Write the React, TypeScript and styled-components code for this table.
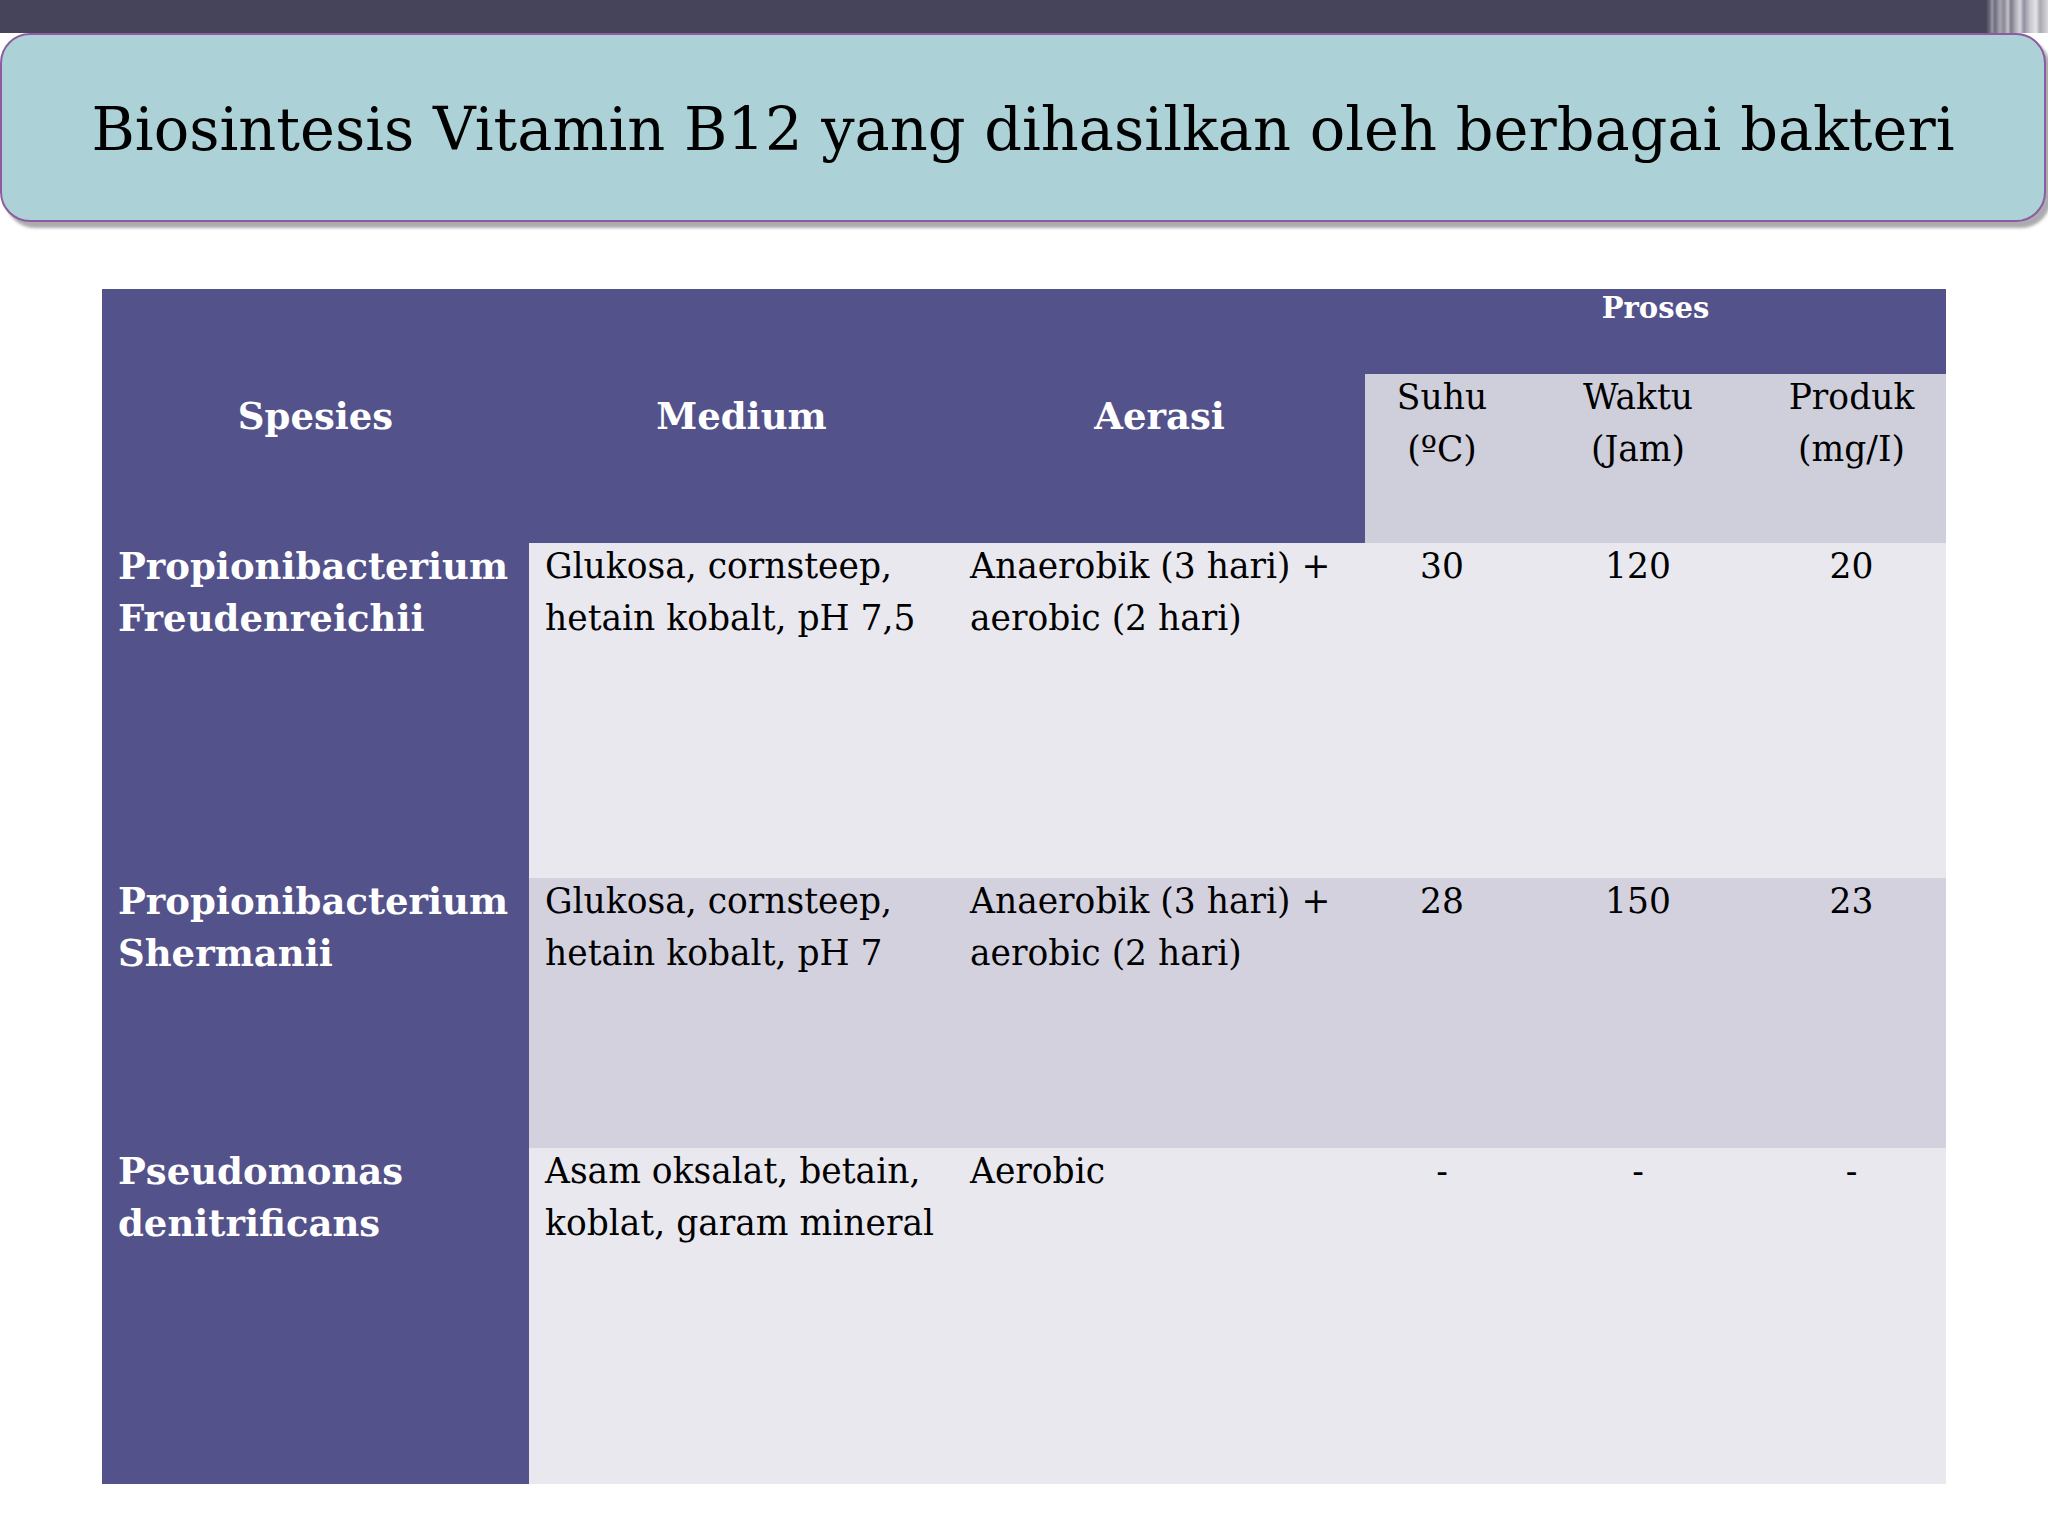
import React from "react";
import styled, { createGlobalStyle } from "styled-components";

const GlobalStyle = createGlobalStyle`
  html, body {
    margin: 0;
    padding: 0;
    background: #ffffff;
  }
  body {
    font-family: "DejaVu Serif", "Liberation Serif", serif;
  }
`;

const Slide = styled.div`
  width: 2048px;
  height: 1536px;
  background: #ffffff;
  display: flex;
  flex-direction: column;
  overflow: hidden;
`;

const TopBar = styled.div`
  height: 33px;
  background: #46445a;
  display: flex;
  justify-content: flex-end;
  flex-shrink: 0;
`;

const Stripes = styled.div`
  width: 62px;
  height: 100%;
  background: linear-gradient(
    90deg,
    #46445a 0px,
    #6e6d7c 4px,
    #9a99a6 6px,
    #6e6d7c 9px,
    #a7a6b2 14px,
    #8a8996 18px,
    #c5c4cc 22px,
    #7b7a88 25px,
    #b4b3bd 30px,
    #d6d5dc 34px,
    #8f8e9b 38px,
    #c8c7cf 44px,
    #e4e3e8 50px,
    #a9a8b2 54px,
    #d9d8de 62px
  );
`;

const TitleBox = styled.div`
  width: 2046px;
  height: 189px;
  box-sizing: border-box;
  background: #acd2d7;
  border: 2px solid #8d5c9f;
  border-radius: 30px;
  box-shadow: 5px 6px 3px rgba(70, 70, 80, 0.45);
  display: flex;
  align-items: center;
  justify-content: center;
  flex-shrink: 0;
`;

const Title = styled.h1`
  margin: 0;
  font-family: "DejaVu Serif", "Liberation Serif", serif;
  font-weight: normal;
  font-size: 59px;
  color: #000000;
  white-space: nowrap;
  transform: translateY(2px);
`;

const Table = styled.div`
  display: grid;
  grid-template-columns: 427px 425px 411px 154px 238px 189px;
  grid-template-rows: 85px 169px 335px 270px 336px;
  margin: 67px 0 0 102px;
  width: 1844px;
`;

type Tone = "head" | "sub" | "light" | "mid";

const toneBg: Record<Tone, string> = {
  head: "#54528a",
  sub: "#cfcedb",
  light: "#e9e8ef",
  mid: "#d3d1de",
};

const Cell = styled.div<{
  $tone: Tone;
  $col?: string;
  $row?: string;
  $center?: boolean;
  $middle?: boolean;
  $bold?: boolean;
}>`
  background: ${(p) => toneBg[p.$tone]};
  grid-column: ${(p) => p.$col ?? "auto"};
  grid-row: ${(p) => p.$row ?? "auto"};
  color: ${(p) => (p.$tone === "head" ? "#ffffff" : "#000000")};
  font-family: "DejaVu Serif", "Liberation Serif", serif;
  font-weight: ${(p) => (p.$bold ? "bold" : "normal")};
  font-size: ${(p) => (p.$bold ? "37px" : "34.5px")};
  line-height: 52px;
  box-sizing: border-box;
  padding: 0 ${(p) => (p.$center ? "4px" : "16px")};
  text-align: ${(p) => (p.$center ? "center" : "left")};
  display: flex;
  flex-direction: column;
  justify-content: ${(p) => (p.$middle ? "center" : "flex-start")};
`;

const Stack = styled.div<{ $shift?: number }>`
  margin-top: ${(p) => p.$shift ?? -3}px;
`;

const HeadLabel = styled.span`
  font-weight: bold;
  font-size: 37px;
  color: #ffffff;
`;

const GroupLabel = styled.span`
  display: block;
  font-weight: bold;
  font-size: 29px;
  line-height: 44px;
  color: #ffffff;
`;

const Line = styled.span`
  display: block;
  white-space: nowrap;
`;

type Row = {
  species: string[];
  medium: string[];
  aerasi: string[];
  suhu: string;
  waktu: string;
  produk: string;
  tone: Tone;
};

const rows: Row[] = [
  {
    species: ["Propionibacterium", "Freudenreichii"],
    medium: ["Glukosa, cornsteep,", "hetain kobalt, pH 7,5"],
    aerasi: ["Anaerobik (3 hari) +", "aerobic (2 hari)"],
    suhu: "30",
    waktu: "120",
    produk: "20",
    tone: "light",
  },
  {
    species: ["Propionibacterium", "Shermanii"],
    medium: ["Glukosa, cornsteep,", "hetain kobalt, pH 7"],
    aerasi: ["Anaerobik (3 hari) +", "aerobic (2 hari)"],
    suhu: "28",
    waktu: "150",
    produk: "23",
    tone: "mid",
  },
  {
    species: ["Pseudomonas", "denitrificans"],
    medium: ["Asam oksalat, betain,", "koblat, garam mineral"],
    aerasi: ["Aerobic"],
    suhu: "-",
    waktu: "-",
    produk: "-",
    tone: "light",
  },
];

const Lines = ({ items }: { items: string[] }) => (
  <Stack>
    {items.map((s) => (
      <Line key={s}>{s}</Line>
    ))}
  </Stack>
);

export default function App() {
  return (
    <>
      <GlobalStyle />
      <Slide>
        <TopBar>
          <Stripes />
        </TopBar>
        <TitleBox>
          <Title>Biosintesis Vitamin B12 yang dihasilkan oleh berbagai bakteri</Title>
        </TitleBox>
        <Table>
          <Cell $tone="head" $col="1" $row="1 / span 2" $center $middle>
            <HeadLabel>Spesies</HeadLabel>
          </Cell>
          <Cell $tone="head" $col="2" $row="1 / span 2" $center $middle>
            <HeadLabel>Medium</HeadLabel>
          </Cell>
          <Cell $tone="head" $col="3" $row="1 / span 2" $center $middle>
            <HeadLabel>Aerasi</HeadLabel>
          </Cell>
          <Cell $tone="head" $col="4 / span 3" $row="1" $center>
            <Stack>
              <GroupLabel>Proses</GroupLabel>
            </Stack>
          </Cell>
          <Cell $tone="sub" $center>
            <Lines items={["Suhu", "(ºC)"]} />
          </Cell>
          <Cell $tone="sub" $center>
            <Lines items={["Waktu", "(Jam)"]} />
          </Cell>
          <Cell $tone="sub" $center>
            <Lines items={["Produk", "(mg/I)"]} />
          </Cell>
          {rows.map((r, i) => (
            <React.Fragment key={i}>
              <Cell $tone="head" $bold>
                <Lines items={r.species} />
              </Cell>
              <Cell $tone={r.tone}>
                <Lines items={r.medium} />
              </Cell>
              <Cell $tone={r.tone}>
                <Lines items={r.aerasi} />
              </Cell>
              <Cell $tone={r.tone} $center>
                <Lines items={[r.suhu]} />
              </Cell>
              <Cell $tone={r.tone} $center>
                <Lines items={[r.waktu]} />
              </Cell>
              <Cell $tone={r.tone} $center>
                <Lines items={[r.produk]} />
              </Cell>
            </React.Fragment>
          ))}
        </Table>
      </Slide>
    </>
  );
}
